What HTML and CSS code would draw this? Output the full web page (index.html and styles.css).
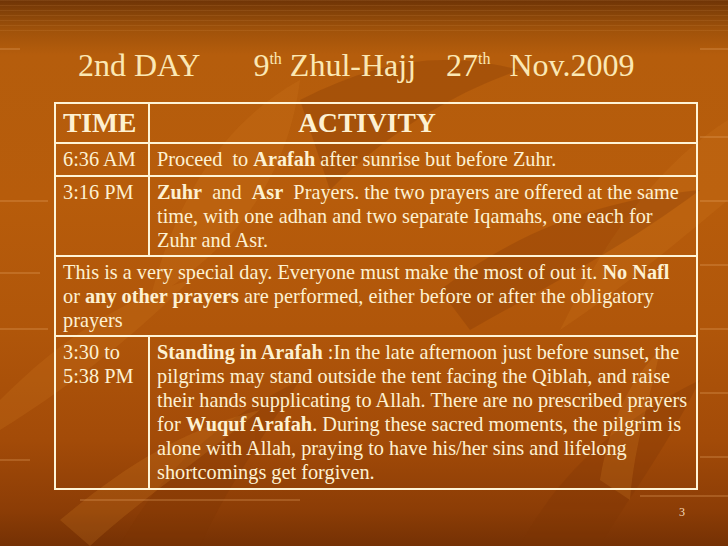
FILE: index.html
```html
<!DOCTYPE html>
<html>
<head>
<meta charset="utf-8">
<link rel="stylesheet" href="styles.css">
</head>
<body>
<div class="slide">
  <svg class="bg" width="728" height="546" viewBox="0 0 728 546" aria-hidden="true">
    <g fill="#d07a20" opacity="0.22">
      <path d="M150 300 C170 220 210 130 300 80 C290 160 250 240 150 300 Z"/>
      <path d="M560 330 C600 250 650 170 728 120 L728 200 C680 240 620 290 560 330 Z"/>
      <path d="M0 400 C60 340 120 300 190 280 C140 330 80 380 0 430 Z"/>
    </g>
    <g fill="#7a3204" opacity="0.25">
      <path d="M300 100 C380 60 440 50 520 70 C460 90 390 130 330 190 Z"/>
      <path d="M440 290 C520 230 600 200 700 190 C620 250 540 290 470 330 Z"/>
      <path d="M120 546 C160 470 220 420 300 380 C260 440 220 500 200 546 Z"/>
      <path d="M520 546 C560 470 620 420 700 380 C660 460 620 510 600 546 Z"/>
    </g>
    <g fill="#e4902e" opacity="0.18">
      <path d="M60 520 C120 470 180 430 260 410 C200 460 140 500 90 546 Z"/>
      <path d="M600 480 C610 420 630 380 660 350 C650 400 635 440 630 500 Z"/>
    </g>
    <g stroke="#e8a868" stroke-width="1" opacity="0.55">
      <line x1="0" y1="49" x2="20" y2="49"/>
      <line x1="700" y1="49" x2="728" y2="49"/>
      <line x1="0" y1="201" x2="48" y2="201"/>
      <line x1="0" y1="273" x2="40" y2="273"/>
      <line x1="0" y1="329" x2="48" y2="329"/>
      <line x1="0" y1="460" x2="30" y2="460"/>
      <line x1="700" y1="137" x2="728" y2="137"/>
      <line x1="700" y1="201" x2="728" y2="201"/>
      <line x1="700" y1="265" x2="728" y2="265"/>
      <line x1="700" y1="329" x2="728" y2="329"/>
      <line x1="700" y1="393" x2="728" y2="393"/>
      <line x1="700" y1="457" x2="728" y2="457"/>
      <line x1="640" y1="496" x2="728" y2="496"/>
      <line x1="80" y1="500" x2="300" y2="500"/>
    </g>
  </svg>
  <h1 class="title"><span class="t-day">2nd DAY</span><span class="t-gap1">9<sup>th</sup> Zhul-Hajj</span><span class="t-gap2">27<sup>th</sup></span><span class="t-gap3">Nov.2009</span></h1>
  <table class="schedule">
    <tr class="head">
      <th class="col-time">TIME</th>
      <th class="col-act">ACTIVITY</th>
    </tr>
    <tr class="r1">
      <td class="col-time">6:36 AM</td>
      <td class="col-act">Proceed&nbsp; to <b>Arafah</b> after sunrise but before Zuhr.</td>
    </tr>
    <tr class="r2">
      <td class="col-time">3:16 PM</td>
      <td class="col-act"><b>Zuhr</b>&nbsp; and&nbsp; <b>Asr</b>&nbsp; Prayers. the two prayers are offered at the same<br>time, with one adhan and two separate Iqamahs, one each for<br>Zuhr and Asr.</td>
    </tr>
    <tr class="r3">
      <td class="full" colspan="2">This is a very special day. Everyone must make the most of out it. <b>No Nafl</b><br>or <b>any other prayers</b> are performed, either before or after the obligatory<br>prayers</td>
    </tr>
    <tr class="r4">
      <td class="col-time">3:30 to<br>5:38 PM</td>
      <td class="col-act"><b>Standing in Arafah</b> :In the late afternoon just before sunset, the<br>pilgrims may stand outside the tent facing the Qiblah, and raise<br>their hands supplicating to Allah. There are no prescribed prayers<br>for <b>Wuquf Arafah</b>. During these sacred moments, the pilgrim is<br>alone with Allah, praying to have his/her sins and lifelong<br>shortcomings get forgiven.</td>
    </tr>
  </table>
  <div class="page-num">3</div>
</div>
</body>
</html>
```
FILE: styles.css
```css
html, body {
  margin: 0;
  padding: 0;
}
body {
  width: 728px;
  height: 546px;
  overflow: hidden;
  font-family: "Liberation Serif", "Times New Roman", serif;
}
.slide {
  position: relative;
  width: 728px;
  height: 546px;
  box-sizing: border-box;
  padding-top: 46px;
  color: #fdf1d2;
  background:
    repeating-linear-gradient(180deg, rgba(255,190,120,0.10) 0 1px, rgba(0,0,0,0) 1px 5px) 0 0 / 728px 34px no-repeat,
    linear-gradient(180deg, #6f3406 0px, #874408 14px, #a0520a 30px, #b55d0c 55px, #b75c0b 200px, #b0560a 330px, #a34b08 440px, #8c3d06 510px, #753104 546px);
}
.bg {
  position: absolute;
  left: 0;
  top: 0;
  z-index: 0;
}
.title, .schedule, .page-num {
  position: relative;
  z-index: 1;
}
.title {
  margin: 0;
  padding-left: 78px;
  font-size: 32px;
  line-height: 38px;
  font-weight: normal;
  color: #fbe8b4;
  white-space: nowrap;
}
.title sup {
  font-size: 16px;
  vertical-align: 0;
  position: relative;
  top: -12px;
  line-height: 0;
}
.t-gap1 { margin-left: 53px; }
.t-gap2 { margin-left: 30px; }
.t-gap3 { margin-left: 19px; }

.schedule {
  margin: 18px 0 0 54px;
  width: 644px;
  border-collapse: collapse;
  border: 2px solid #fff4d6;
  font-size: 20.3px;
  line-height: 24px;
  color: #fdf1d2;
}
.schedule th, .schedule td {
  border: 2px solid #fff4d6;
  text-align: left;
  vertical-align: top;
  padding: 3px 0 3px 7px;
  white-space: nowrap;
}
.schedule .col-time {
  width: 85px;
}
.schedule b {
  font-weight: bold;
}
.head th {
  height: 34px;
  font-size: 27.5px;
  font-weight: bold;
  vertical-align: middle;
  padding-top: 2px;
  padding-bottom: 2px;
}
.head .col-act {
  text-align: center;
  padding-left: 0;
  padding-right: 112px;
}
.r1 td {
  padding-bottom: 4px;
}
.r4 td {
  padding-bottom: 4px;
}
.page-num {
  margin-top: 15px;
  padding-right: 43px;
  text-align: right;
  font-size: 12px;
  line-height: 14px;
  color: #f6dcbc;
}
```
